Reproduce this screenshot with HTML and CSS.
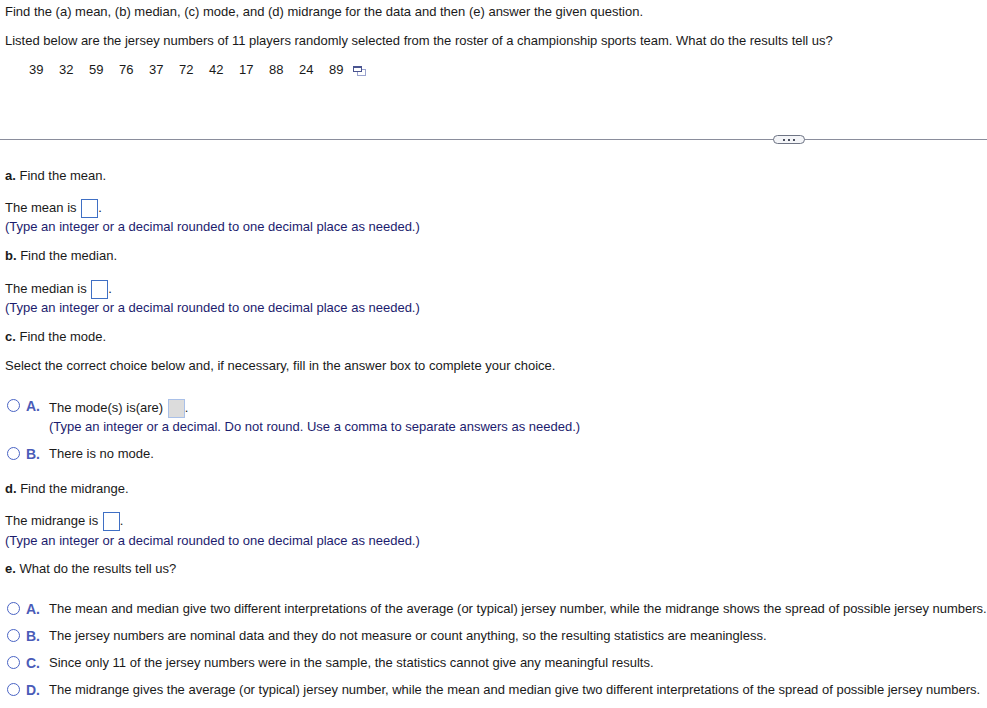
FILE: index.html
```html
<!DOCTYPE html>
<html lang="en">
<head>
  <meta charset="UTF-8" />
  <title>Statistics question</title>
  <link rel="stylesheet" href="styles.css">
</head>
<body>

<!-- question text -->
<p class="line q-first">Find the (a) mean, (b) median, (c) mode, and (d) midrange for the data and then (e) answer the given question.</p>
<p class="line q-second">Listed below are the jersey numbers of 11 players randomly selected from the roster of a championship sports team. What do the results tell us?</p>

<div class="data-row">
  <span>39</span><span>32</span><span>59</span><span>76</span><span>37</span><span>72</span><span>42</span><span>17</span><span>88</span><span>24</span><span>89</span>
  <svg class="copy-icon" width="13" height="11" viewBox="0 0 13 11">
    <rect x="4.5" y="4.5" width="8" height="6" fill="#fff" stroke="#9aa3cf" />
    <rect x="0.5" y="1.5" width="8" height="5" fill="#fff" stroke="#4a5590" />
    <rect x="0.5" y="1.5" width="8" height="1.5" fill="#4a5590" />
  </svg>
</div>

<div class="divider">
  <div class="more-btn"><i></i><i></i><i></i></div>
</div>

<!-- a -->
<p class="line part-a"><b>a.</b> Find the mean.</p>
<p class="line answer">The mean is <span class="box"></span>.</p>
<p class="line hint">(Type an integer or a decimal rounded to one decimal place as needed.)</p>

<!-- b -->
<p class="line part-next"><b>b.</b> Find the median.</p>
<p class="line answer answer-b">The median is <span class="box"></span>.</p>
<p class="line hint">(Type an integer or a decimal rounded to one decimal place as needed.)</p>

<!-- c -->
<p class="line part-next"><b>c.</b> Find the mode.</p>
<p class="line select">Select the correct choice below and, if necessary, fill in the answer box to complete your choice.</p>

<div class="choice choice-modeA">
  <span class="radio"></span><span class="letter">A.</span>
  <div class="choice-body">
    <div class="line">The mode(s) is(are) <span class="box box-off"></span>.</div>
    <div class="line hint">(Type an integer or a decimal. Do not round. Use a comma to separate answers as needed.)</div>
  </div>
</div>
<div class="choice choice-modeB">
  <span class="radio"></span><span class="letter">B.</span>
  <div class="line">There is no mode.</div>
</div>

<!-- d -->
<p class="line part-d"><b>d.</b> Find the midrange.</p>
<p class="line answer">The midrange is <span class="box"></span>.</p>
<p class="line hint hint-d">(Type an integer or a decimal rounded to one decimal place as needed.)</p>

<!-- e -->
<p class="line part-e"><b>e.</b> What do the results tell us?</p>

<div class="choices-e">
  <div class="choice">
    <span class="radio"></span><span class="letter">A.</span>
    <div class="line">The mean and median give two different interpretations of the average (or typical) jersey number, while the midrange shows the spread of possible jersey numbers.</div>
  </div>
  <div class="choice">
    <span class="radio"></span><span class="letter">B.</span>
    <div class="line">The jersey numbers are nominal data and they do not measure or count anything, so the resulting statistics are meaningless.</div>
  </div>
  <div class="choice">
    <span class="radio"></span><span class="letter">C.</span>
    <div class="line">Since only 11 of the jersey numbers were in the sample, the statistics cannot give any meaningful results.</div>
  </div>
  <div class="choice">
    <span class="radio"></span><span class="letter">D.</span>
    <div class="line">The midrange gives the average (or typical) jersey number, while the mean and median give two different interpretations of the spread of possible jersey numbers.</div>
  </div>
</div>

</body>
</html>
```

FILE: styles.css
```css
body {
  margin: 0;
  padding-left: 5px;
  font-family: "Liberation Sans", Arial, sans-serif;
  font-size: 13px;
  color: #1a1a1a;
  background: white;
  overflow: hidden;
  white-space: nowrap;
}

p {
  margin: 0;
}

.line {
  line-height: 18px;
  height: 18px;
}

.q-first {
  margin-top: 3px;
}

.q-second {
  margin-top: 11px;
}

.data-row {
  display: flex;
  align-items: center;
  margin-top: 10px;
  padding-left: 24px;
  height: 18px;
}

.data-row span {
  width: 30px;
}

.copy-icon {
  margin-left: -6px;
  margin-top: 2px;
}

.divider {
  position: relative;
  margin: 61px 0 0 -5px;
  height: 1px;
  background: #8a8d9c;
}

.more-btn {
  position: absolute;
  left: 773px;
  top: -4px;
  width: 32px;
  height: 9px;
  box-sizing: border-box;
  display: flex;
  justify-content: center;
  align-items: center;
  gap: 3px;
  background: #f4f5f8;
  border: 1px solid #6e7484;
  border-radius: 5px;
}

.more-btn i {
  width: 2px;
  height: 2px;
  background: #4a4f5e;
}

.part-a {
  margin-top: 27px;
}

.part-next {
  margin-top: 11px;
}

.part-d {
  margin-top: 17px;
}

.part-e {
  margin-top: 10px;
}

.answer {
  margin-top: 14px;
}

.answer-b {
  margin-top: 15px;
}

.hint {
  margin-top: 1px;
  color: #1c1c6e;
}

.hint-d {
  margin-top: 2px;
}

.select {
  margin-top: 11px;
}

.box {
  display: inline-block;
  width: 17px;
  height: 19px;
  margin-left: 1px;
  box-sizing: border-box;
  vertical-align: -6px;
  background: white;
  border: 1px solid #3f6fc4;
}

.box-off {
  background: #dcdcdc;
  border-color: #a9c0e8;
}

.choice {
  display: flex;
}

.choice-modeA {
  margin-top: 22px;
}

.choice-modeB {
  margin-top: 9px;
}

.choice-body {
  padding-top: 2px;
}

.radio {
  flex: none;
  width: 13px;
  height: 13px;
  margin: 2px 6px 0 2px;
  box-sizing: border-box;
  background: white;
  border: 1.5px solid #4a64c4;
  border-radius: 50%;
}

.letter {
  flex: none;
  width: 23px;
  line-height: 18px;
  font-size: 14px;
  font-weight: bold;
  color: #4a5bb8;
}

.choices-e {
  display: flex;
  flex-direction: column;
  gap: 9px;
  margin-top: 22px;
}
```
